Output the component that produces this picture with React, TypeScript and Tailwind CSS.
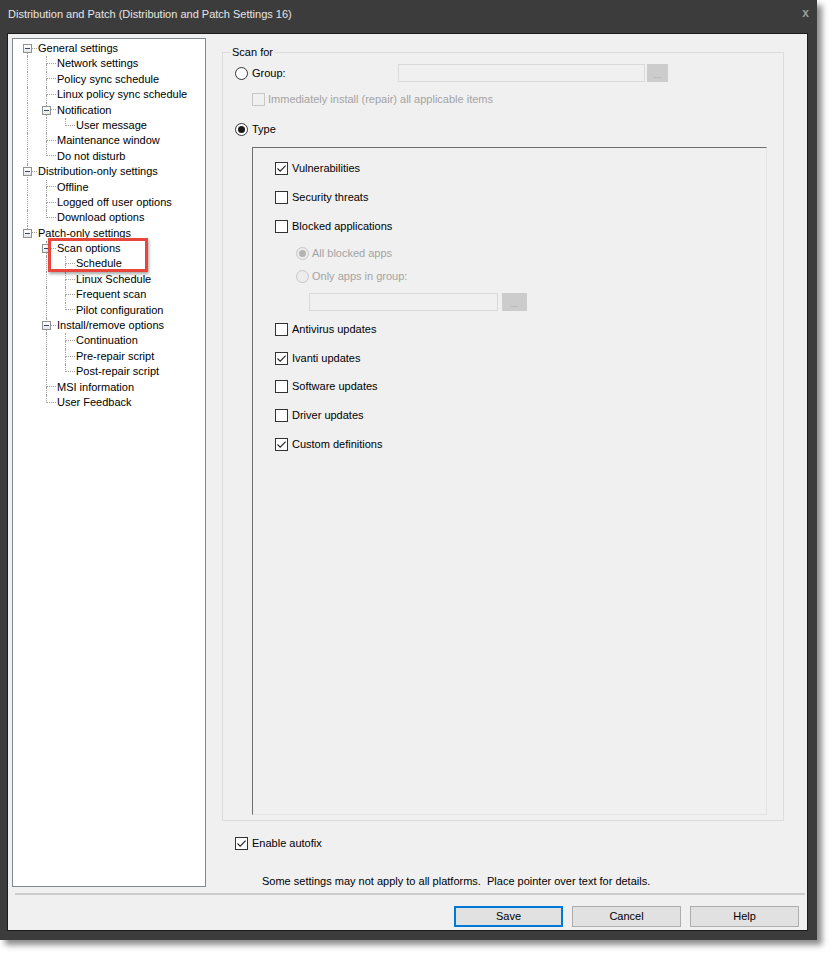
import React from 'react';

type TreeNode = { label: string; children?: TreeNode[] };

const tree: TreeNode[] = [
  {
    label: 'General settings',
    children: [
      { label: 'Network settings' },
      { label: 'Policy sync schedule' },
      { label: 'Linux policy sync schedule' },
      { label: 'Notification', children: [{ label: 'User message' }] },
      { label: 'Maintenance window' },
      { label: 'Do not disturb' },
    ],
  },
  {
    label: 'Distribution-only settings',
    children: [{ label: 'Offline' }, { label: 'Logged off user options' }, { label: 'Download options' }],
  },
  {
    label: 'Patch-only settings',
    children: [
      {
        label: 'Scan options',
        children: [
          { label: 'Schedule' },
          { label: 'Linux Schedule' },
          { label: 'Frequent scan' },
          { label: 'Pilot configuration' },
        ],
      },
      {
        label: 'Install/remove options',
        children: [{ label: 'Continuation' }, { label: 'Pre-repair script' }, { label: 'Post-repair script' }],
      },
      { label: 'MSI information' },
      { label: 'User Feedback' },
    ],
  },
];

type Row = {
  label: string;
  guides: boolean[];
  hasNext: boolean;
  firstRoot: boolean;
  expandable: boolean;
};

function flatten(nodes: TreeNode[], guides: boolean[], rows: Row[]) {
  nodes.forEach((n, i) => {
    const hasNext = i < nodes.length - 1;
    rows.push({
      label: n.label,
      guides,
      hasNext,
      firstRoot: guides.length === 0 && i === 0,
      expandable: !!n.children,
    });
    if (n.children) flatten(n.children, [...guides, hasNext], rows);
  });
  return rows;
}

const rows = flatten(tree, [], []);

const dots = 'border-dotted border-[#a0a0a0]';

function GuideCell({ on }: { on: boolean }) {
  return (
    <div className="w-[19px] h-full grid grid-cols-[10px_9px]">
      <div className={on ? `border-r ${dots}` : ''} />
    </div>
  );
}

function NodeCell({ row }: { row: Row }) {
  return (
    <div className="relative w-[19px] h-full grid grid-cols-[10px_9px] grid-rows-2">
      <div className={row.firstRoot ? '' : `border-r ${dots}`} />
      <div className={`border-b ${dots}`} />
      <div className={row.hasNext ? `border-r ${dots}` : ''} />
      <div />
      {row.expandable && (
        <div className="absolute left-[5px] top-[3px] w-[9px] h-[9px] border border-[#919191] bg-gradient-to-b from-white to-[#e6e6e6] flex items-center justify-center">
          <div className="w-[5px] h-[1px] bg-[#3a4a66]" />
        </div>
      )}
    </div>
  );
}

function Tree() {
  return (
    <div className="relative w-[194px] h-[849px] bg-white border border-[#828790] pt-[2px] pl-[5px]">
      {rows.map((r) => (
        <div key={r.label} className="flex h-[15.4px] items-stretch">
          {r.guides.map((g, i) => (
            <GuideCell key={i} on={g} />
          ))}
          <NodeCell row={r} />
          <span className="pl-[1px] leading-[15.4px] text-black whitespace-nowrap">{r.label}</span>
        </div>
      ))}
      <div className="absolute left-[35px] top-[199px] w-[100px] h-[34px] border-[3px] border-[#e8453c] shadow-[1px_2px_3px_rgba(0,0,0,0.35)]" />
    </div>
  );
}

function CheckBox({ checked, disabled }: { checked?: boolean; disabled?: boolean }) {
  return (
    <div
      className={`w-[13px] h-[13px] border flex items-center justify-center shrink-0 ${
        disabled ? 'border-[#c6c6c6] bg-[#f0f0f0]' : 'border-[#333333] bg-white'
      }`}
    >
      {checked && (
        <svg width="11" height="11" viewBox="0 0 11 11">
          <path d="M1.5 5.5 L4.2 8.2 L9.6 2.6" fill="none" stroke="#222" strokeWidth="1.1" />
        </svg>
      )}
    </div>
  );
}

function Radio({ checked, disabled }: { checked?: boolean; disabled?: boolean }) {
  return (
    <div
      className={`w-[13px] h-[13px] rounded-full border flex items-center justify-center shrink-0 ${
        disabled ? 'border-[#c6c6c6] bg-[#ececec]' : 'border-[#333333] bg-white'
      }`}
    >
      {checked && <div className={`w-[7px] h-[7px] rounded-full ${disabled ? 'bg-[#b5b5b5]' : 'bg-[#1a1a1a]'}`} />}
    </div>
  );
}

function Check({ label, checked, className = '' }: { label: string; checked?: boolean; className?: string }) {
  return (
    <div className={`flex items-center h-[14px] ${className}`}>
      <CheckBox checked={checked} />
      <span className="ml-[4px]">{label}</span>
    </div>
  );
}

function BrowseBox({ width, button }: { width: string; button: string }) {
  return (
    <div className="flex">
      <div className={`${width} h-[18px] border border-[#d9d9d9] bg-[#f0f0f0]`} />
      <div className={`${button} h-[18px] bg-[#cccccc] flex items-end justify-center text-[9px] leading-[14px] text-[#a3a3a3]`}>
        ...
      </div>
    </div>
  );
}

export default function App() {
  return (
    <div className="min-h-[955px] bg-white text-[11px] text-black font-['Liberation_Sans',Arial,sans-serif]">
      <div className="w-[817px] h-[940px] bg-[#3c3c3c] shadow-[5px_5px_6px_rgba(0,0,0,0.45)] flex flex-col">
        <div className="h-[33px] flex justify-between pl-[8px] pr-[8px] pt-[7px]">
          <span className="leading-[14px] text-[#e6e6e6]">Distribution and Patch (Distribution and Patch Settings 16)</span>
          <span className="leading-[12px] text-[12px] font-bold text-[#9c9c9c]">x</span>
        </div>
        <div className="ml-[7px] w-[801px] h-[898px] bg-[#f0f0f0] border border-[#1c1c1c] flex flex-col">
          <div className="flex pl-[4px] pt-[4px]">
            <Tree />
            <div className="ml-[16px] flex flex-col">
              <fieldset className="mt-[7px] w-[562px] h-[776px] border border-[#dcdcdc] m-0 p-0">
                <legend className="ml-[8px] px-[1px] leading-[14px]">Scan for</legend>
                <div className="flex flex-col pl-[12px]">
                  <div className="mt-[5px] flex items-center h-[18px]">
                    <div className="w-[163px] flex items-center">
                      <Radio />
                      <span className="ml-[4px]">Group:</span>
                    </div>
                    <BrowseBox width="w-[247px]" button="ml-[2px] w-[21px]" />
                  </div>
                  <div className="mt-[10px] ml-[17px] flex items-center h-[14px] text-[#a3a3a3]">
                    <CheckBox disabled />
                    <span className="ml-[3px]">Immediately install (repair) all applicable items</span>
                  </div>
                  <div className="mt-[16px] flex items-center h-[14px]">
                    <Radio checked />
                    <span className="ml-[4px]">Type</span>
                  </div>
                  <div className="mt-[11px] ml-[17px] w-[515px] h-[668px] border-t border-l border-[#6e6e6e] border-r border-b border-r-[#e3e3e3] border-b-[#e3e3e3] pl-[22px] pt-[13px] flex flex-col">
                    <Check label="Vulnerabilities" checked />
                    <Check label="Security threats" className="mt-[15px]" />
                    <Check label="Blocked applications" className="mt-[15px]" />
                    <div className="mt-[13px] ml-[21px] flex items-center h-[14px] text-[#a3a3a3]">
                      <Radio checked disabled />
                      <span className="ml-[3px]">All blocked apps</span>
                    </div>
                    <div className="mt-[9px] ml-[21px] flex items-center h-[14px] text-[#a3a3a3]">
                      <Radio disabled />
                      <span className="ml-[3px]">Only apps in group:</span>
                    </div>
                    <div className="mt-[10px] ml-[34px]">
                      <BrowseBox width="w-[189px]" button="ml-[4px] w-[25px]" />
                    </div>
                    <Check label="Antivirus updates" className="mt-[11px]" />
                    <Check label="Ivanti updates" checked className="mt-[15px]" />
                    <Check label="Software updates" className="mt-[14px]" />
                    <Check label="Driver updates" className="mt-[15px]" />
                    <Check label="Custom definitions" checked className="mt-[15px]" />
                  </div>
                </div>
              </fieldset>
              <Check label="Enable autofix" checked className="mt-[15px] ml-[13px]" />
              <div className="mt-[24px] ml-[40px] leading-[14px] whitespace-pre">
                Some settings may not apply to all platforms.  Place pointer over text for details.
              </div>
            </div>
          </div>
          <div className="mt-[5px] ml-[7px] w-[790px] border-t-2 border-[#cdcdcd]" />
          <div className="mt-[11px] flex justify-end gap-[9px] pr-[8px]">
            <button className="w-[109px] h-[21px] bg-[#e1e1e1] border-2 border-[#0078d7] leading-[17px]">Save</button>
            <button className="w-[109px] h-[21px] bg-[#e1e1e1] border border-[#adadad] leading-[19px]">Cancel</button>
            <button className="w-[109px] h-[21px] bg-[#e1e1e1] border border-[#adadad] leading-[19px]">Help</button>
          </div>
        </div>
      </div>
    </div>
  );
}
